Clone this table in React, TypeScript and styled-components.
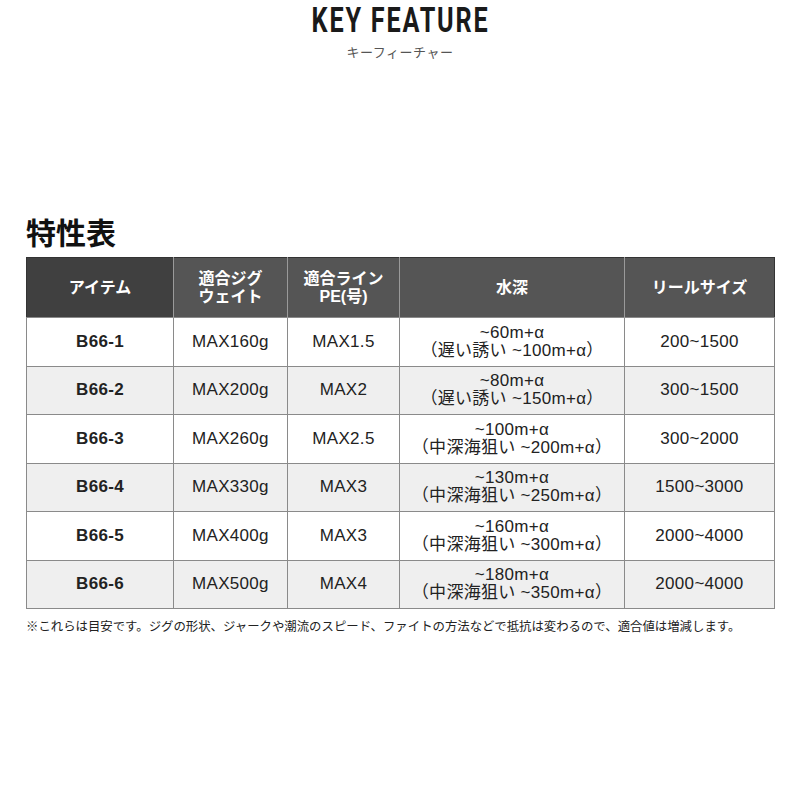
import React from "react";
import styled, { createGlobalStyle } from "styled-components";

const GlobalStyle = createGlobalStyle`
  body {
    margin: 0;
    background: #fff;
    font-family: "Liberation Sans", "Noto Sans CJK JP", sans-serif;
    color: #222;
  }
`;

const Page = styled.div`
  width: 800px;
  padding: 0 26px;
  box-sizing: border-box;
`;

const Hero = styled.header`
  display: flex;
  flex-direction: column;
  align-items: center;
  padding-top: 2px;
`;

const HeroTitle = styled.h1`
  margin: 0;
  display: inline-block;
  font-family: Roboto, "Liberation Sans", sans-serif;
  font-weight: bold;
  font-size: 35px;
  line-height: 38px;
  letter-spacing: 2.5px;
  color: #1a1a1a;
  transform: scaleX(0.72);
`;

const HeroSub = styled.div`
  margin-top: 3px;
  font-family: "Noto Sans CJK JP", sans-serif;
  font-size: 13px;
  line-height: 18px;
  letter-spacing: 0.5px;
  color: #555;
`;

const SectionTitle = styled.h2`
  margin: 152px 0 8px;
  font-family: "Noto Sans CJK JP", sans-serif;
  font-weight: bold;
  font-size: 30px;
  line-height: 36px;
  color: #111;
`;

const Table = styled.table`
  width: 748px;
  border-collapse: collapse;
  border: 1.5px solid #333;
  table-layout: fixed;
`;

const Th = styled.th<{ $dark?: boolean; $w: number }>`
  width: ${(p) => p.$w}px;
  height: 59px;
  padding: 0;
  background: ${(p) => (p.$dark ? "#404040" : "#555")};
  color: #fff;
  font-family: "Liberation Sans", "Noto Sans CJK JP", sans-serif;
  font-weight: bold;
  font-size: 16px;
  line-height: 18px;
  text-align: center;
  border-right: 1px solid #9a9a9a;
  &:last-child {
    border-right: none;
  }
`;

const Tr = styled.tr<{ $alt: boolean }>`
  background: ${(p) => (p.$alt ? "#efefef" : "#fff")};
`;

const Td = styled.td<{ $bold?: boolean }>`
  height: 47.5px;
  padding: 0;
  text-align: center;
  font-size: 17px;
  line-height: 18px;
  letter-spacing: 0.3px;
  font-weight: ${(p) => (p.$bold ? "bold" : "normal")};
  color: #222;
  border: 1px solid #8a8a8a;
`;

const Note = styled.p`
  margin: 8px 0 0;
  font-family: "Noto Sans CJK JP", sans-serif;
  font-size: 12.4px;
  line-height: 18px;
  color: #222;
`;

const rows = [
  ["B66-1", "MAX160g", "MAX1.5", "~60m+α", "（遅い誘い ~100m+α）", "200~1500"],
  ["B66-2", "MAX200g", "MAX2", "~80m+α", "（遅い誘い ~150m+α）", "300~1500"],
  ["B66-3", "MAX260g", "MAX2.5", "~100m+α", "（中深海狙い ~200m+α）", "300~2000"],
  ["B66-4", "MAX330g", "MAX3", "~130m+α", "（中深海狙い ~250m+α）", "1500~3000"],
  ["B66-5", "MAX400g", "MAX3", "~160m+α", "（中深海狙い ~300m+α）", "2000~4000"],
  ["B66-6", "MAX500g", "MAX4", "~180m+α", "（中深海狙い ~350m+α）", "2000~4000"],
];

const App: React.FC = () => (
  <>
    <GlobalStyle />
    <Page>
      <Hero>
        <HeroTitle>KEY FEATURE</HeroTitle>
        <HeroSub>キーフィーチャー</HeroSub>
      </Hero>
      <SectionTitle>特性表</SectionTitle>
      <Table>
        <thead>
          <tr>
            <Th $dark $w={146}>アイテム</Th>
            <Th $w={113}>
              適合ジグ
              <br />
              ウェイト
            </Th>
            <Th $w={111}>
              適合ライン
              <br />
              PE(号)
            </Th>
            <Th $w={224}>水深</Th>
            <Th $w={149}>リールサイズ</Th>
          </tr>
        </thead>
        <tbody>
          {rows.map((r, i) => (
            <Tr key={r[0]} $alt={i % 2 === 1}>
              <Td $bold>{r[0]}</Td>
              <Td>{r[1]}</Td>
              <Td>{r[2]}</Td>
              <Td>
                {r[3]}
                <br />
                {r[4]}
              </Td>
              <Td>{r[5]}</Td>
            </Tr>
          ))}
        </tbody>
      </Table>
      <Note>
        ※これらは目安です。ジグの形状、ジャークや潮流のスピード、ファイトの方法などで抵抗は変わるので、適合値は増減します。
      </Note>
    </Page>
  </>
);

export default App;
